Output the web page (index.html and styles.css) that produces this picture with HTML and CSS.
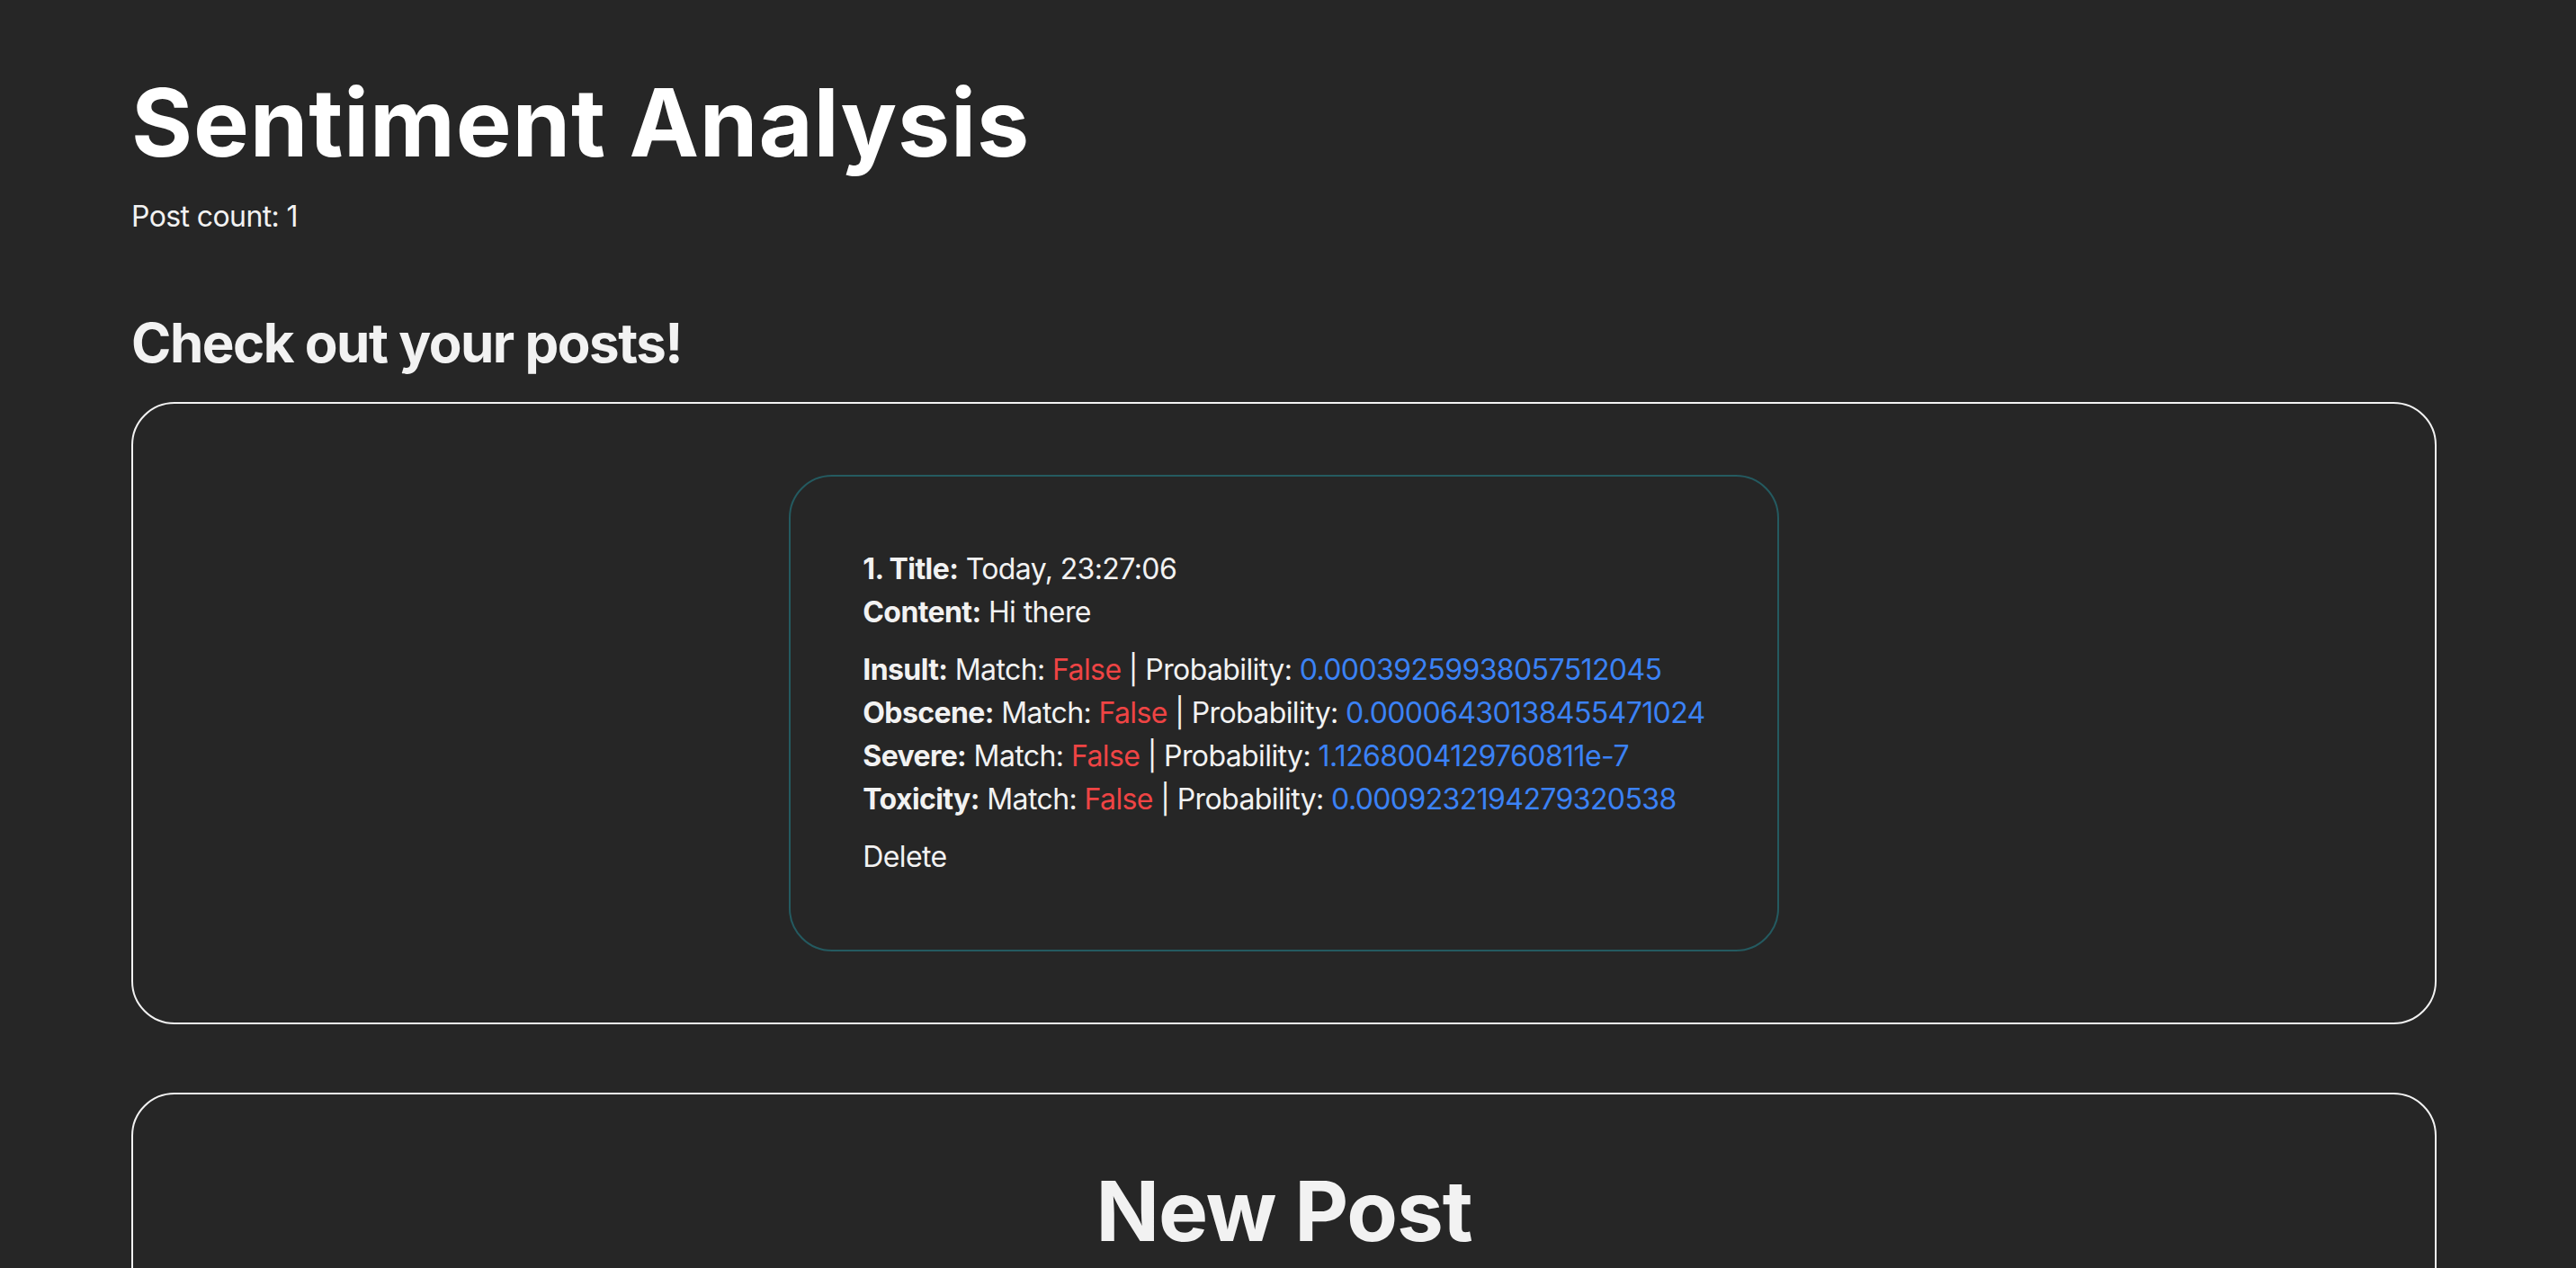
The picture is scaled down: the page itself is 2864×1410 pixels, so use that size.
FILE: index.html
```html
<!DOCTYPE html>
<html lang="en">
<head>
<meta charset="utf-8">
<title>Sentiment Analysis</title>
<link rel="stylesheet" href="styles.css">
</head>
<body>
<div class="app">
  <h1 class="page-title">Sentiment Analysis</h1>
  <p class="post-count">Post count: 1</p>

  <h2 class="section-title">Check out your posts!</h2>
  <section class="panel posts-panel">
    <article class="post-card">
      <div class="post-head">
        <div><strong>1. Title:</strong> Today, 23:27:06</div>
        <div><strong>Content:</strong> Hi there</div>
      </div>
      <div class="post-scores">
        <div><strong>Insult:</strong> Match: <span class="false">False</span> | Probability: <span class="prob">0.00039259938057512045</span></div>
        <div><strong>Obscene:</strong> Match: <span class="false">False</span> | Probability: <span class="prob">0.000064301384554710​24</span></div>
        <div><strong>Severe:</strong> Match: <span class="false">False</span> | Probability: <span class="prob">1.1268004129760811e-7</span></div>
        <div><strong>Toxicity:</strong> Match: <span class="false">False</span> | Probability: <span class="prob">0.0009232194279320538</span></div>
      </div>
      <div class="post-actions">
        <span class="delete">Delete</span>
      </div>
    </article>
  </section>

  <section class="panel new-panel">
    <h1 class="new-title">New Post</h1>
    <form class="new-form">
      <input class="field" type="text" placeholder="Title">
      <textarea class="field" placeholder="Content"></textarea>
    </form>
  </section>
</div>
</body>
</html>
```

FILE: styles.css
```css
html {
  scrollbar-width: none;
}

body {
  margin: 0;
  background: #262626;
  color: #f2f2f2;
  font-family: Inter, "Liberation Sans", sans-serif;
  font-size: 32px;
  line-height: 48px;
  letter-spacing: -0.6px;
}

.app {
  padding: 82px 155px 0 146px;
}

.page-title {
  margin: 0;
  font-size: 104px;
  line-height: 108px;
  font-weight: 700;
  letter-spacing: 0.8px;
  color: #ffffff;
}

.post-count {
  margin: 26.6px 0 0;
}

.section-title {
  margin: 80px 0 30px;
  font-size: 60px;
  line-height: 72px;
  font-weight: 700;
  letter-spacing: -1.5px;
  color: #f2f2f2;
}

.panel {
  border: 2px solid #f2f2f2;
  border-radius: 48px;
  padding: 79px;
}

.posts-panel {
  display: flex;
  justify-content: center;
}

.post-card {
  width: fit-content;
  border: 2px solid #245a60;
  border-radius: 48px;
  padding: 79px 80px;
  white-space: nowrap;
}

.post-card strong {
  font-weight: 700;
}

.post-scores,
.post-actions {
  margin-top: 16px;
}

.false {
  color: #ef4444;
}

.prob {
  color: #3b82f6;
}

.delete {
  color: #f2f2f2;
}

.new-panel {
  margin-top: 76px;
  text-align: center;
}

.new-title {
  margin: 0;
  font-size: 92.6px;
  line-height: 1.1;
  font-weight: 700;
  letter-spacing: -1.1px;
  color: #f2f2f2;
}

.new-form {
  display: flex;
  flex-direction: column;
  gap: 32px;
  margin-top: 64px;
  align-items: center;
}

.field {
  width: 1000px;
  font: inherit;
  background: #1a1a1a;
  color: #f2f2f2;
  border: 2px solid #555;
  border-radius: 16px;
  padding: 16px;
}
```
